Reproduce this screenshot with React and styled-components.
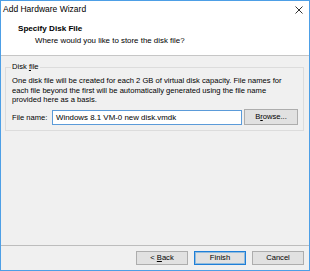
import React from 'react';
import styled, { createGlobalStyle } from 'styled-components';

const Global = createGlobalStyle`
  html, body { margin: 0; padding: 0; background: #fff; }
  body { font-family: "Liberation Sans", Arial, sans-serif; color: #000; }
  * { box-sizing: border-box; }
`;

const Window = styled.div`
  width: 310px;
  height: 271px;
  border: 1px solid #4d9fe6;
  background: #f0f0f0;
  display: flex;
  flex-direction: column;
  overflow: hidden;
`;

const TitleBar = styled.div`
  height: 17px;
  flex: none;
  display: flex;
  align-items: center;
  justify-content: space-between;
  padding: 0 6px 0 2px;
  background: #fff;
  font-size: 8.5px;
  line-height: 17px;
`;

const Header = styled.div`
  height: 38px;
  flex: none;
  background: #fff;
  padding: 5px 0 0 17px;
  border-bottom: 1px solid #c6c6c6;
`;

const HeaderTitle = styled.div`
  font-weight: bold;
  font-size: 8.1px;
  line-height: 12px;
`;

const HeaderSub = styled.div`
  font-size: 7.9px;
  line-height: 12px;
  padding-left: 17px;
`;

const Body = styled.div`
  flex: 1;
  padding: 6px 5px 0 4px;
`;

const Group = styled.fieldset`
  margin: 0;
  padding: 4px 6px 5px 6px;
  border: 1px solid #dcdcdc;
  min-width: 0;
`;

const Legend = styled.legend`
  padding: 0 1px;
  margin-left: -1px;
  font-size: 7.6px;
  line-height: 10px;
`;

const Para = styled.p`
  margin: 0;
  font-size: 7.6px;
  line-height: 9.7px;
  white-space: nowrap;
`;

const FileRow = styled.div`
  display: flex;
  align-items: center;
  height: 16px;
  margin-top: 4px;
`;

const Label = styled.span`
  width: 40px;
  flex: none;
  font-size: 7.6px;
`;

const TextBox = styled.div`
  width: 190px;
  height: 15px;
  flex: none;
  background: #fff;
  border: 1px solid #5b9bd9;
  padding: 0 3px;
  font-size: 7.9px;
  line-height: 13px;
  white-space: nowrap;
`;

const Button = styled.button`
  width: ${p => p.$w || 52}px;
  height: ${p => p.$h || 14}px;
  flex: none;
  margin: 0;
  padding: 0;
  background: #e1e1e1;
  border: 1px solid ${p => (p.$default ? '#1f7fd8' : '#adadad')};
  box-shadow: ${p => (p.$default ? 'inset 0 0 0 1px rgba(0,120,215,0.35)' : 'none')};
  font-family: "Liberation Sans", Arial, sans-serif;
  font-size: 7.6px;
  color: #000;
  line-height: 1;
  margin-left: ${p => p.$ml || 0}px;
`;

const Footer = styled.div`
  flex: none;
  border-top: 1px solid #bdbdbd;
  padding: 5px 5px 5px 0;
  display: flex;
  justify-content: flex-end;
  gap: 6px;
`;

const U = styled.span`
  text-decoration: underline;
  text-underline-offset: 1px;
`;

const CloseIcon = () => (
  <svg width="8" height="8" viewBox="0 0 8 8">
    <path d="M0.5 0.5 L7.5 7.5 M7.5 0.5 L0.5 7.5" stroke="#1a1a1a" strokeWidth="0.9" fill="none" />
  </svg>
);

export default function App() {
  return (
    <>
      <Global />
      <Window>
        <TitleBar>
          <span>Add Hardware Wizard</span>
          <CloseIcon />
        </TitleBar>
        <Header>
          <HeaderTitle>Specify Disk File</HeaderTitle>
          <HeaderSub>Where would you like to store the disk file?</HeaderSub>
        </Header>
        <Body>
          <Group>
            <Legend>Disk <U>f</U>ile</Legend>
            <Para>
              One disk file will be created for each 2 GB of virtual disk capacity. File names for
              <br />
              each file beyond the first will be automatically generated using the file name
              <br />
              provided here as a basis.
            </Para>
            <FileRow>
              <Label>File name:</Label>
              <TextBox>Windows 8.1 VM-0 new disk.vmdk</TextBox>
              <Button $w={54} $h={16} $ml={2}>B<U>r</U>owse...</Button>
            </FileRow>
          </Group>
        </Body>
        <Footer>
          <Button>&lt; <U>B</U>ack</Button>
          <Button $default>Finish</Button>
          <Button>Cancel</Button>
        </Footer>
      </Window>
    </>
  );
}
